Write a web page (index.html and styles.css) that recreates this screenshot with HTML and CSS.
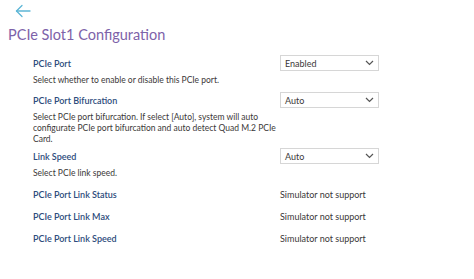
FILE: index.html
```html
<!DOCTYPE html>
<html lang="en">
<head>
    <meta charset="UTF-8">
    <meta name="viewport" content="width=device-width, initial-scale=1.0">
    <title>PCIe Slot1 Configuration</title>
    <link rel="stylesheet" href="styles.css">
</head>
<body>
    <header class="page-header">
        <a href="#" class="back-btn" aria-label="Back">
            <svg width="16" height="14" viewBox="0 0 16 14" fill="none" stroke="currentColor" stroke-width="1.3" stroke-linecap="round" stroke-linejoin="round">
                <path d="M15 7H1.5"/>
                <path d="M7 1.5L1.5 7L7 12.5"/>
            </svg>
        </a>
        <h1 class="page-title">PCIe Slot1 Configuration</h1>
    </header>

    <main class="settings">
        <!-- PCIe Port -->
        <div class="setting setting-first">
            <div class="setting-row">
                <span class="setting-label">PCIe Port</span>
                <div class="select">
                    <span>Enabled</span>
                    <svg class="chevron" width="9" height="6" viewBox="0 0 9 6"><path d="M1 1l3.5 3.5L8 1" fill="none" stroke="currentColor" stroke-width="1.2"/></svg>
                </div>
            </div>
            <p class="setting-desc">Select whether to enable or disable this PCIe port.</p>
        </div>

        <!-- Bifurcation -->
        <div class="setting">
            <div class="setting-row">
                <span class="setting-label">PCIe Port Bifurcation</span>
                <div class="select">
                    <span>Auto</span>
                    <svg class="chevron" width="9" height="6" viewBox="0 0 9 6"><path d="M1 1l3.5 3.5L8 1" fill="none" stroke="currentColor" stroke-width="1.2"/></svg>
                </div>
            </div>
            <p class="setting-desc">Select PCIe port bifurcation. If select [Auto], system will auto configurate PCIe port bifurcation and auto detect Quad M.2 PCIe Card.</p>
        </div>

        <!-- Link Speed -->
        <div class="setting">
            <div class="setting-row">
                <span class="setting-label">Link Speed</span>
                <div class="select">
                    <span>Auto</span>
                    <svg class="chevron" width="9" height="6" viewBox="0 0 9 6"><path d="M1 1l3.5 3.5L8 1" fill="none" stroke="currentColor" stroke-width="1.2"/></svg>
                </div>
            </div>
            <p class="setting-desc">Select PCIe link speed.</p>
        </div>

        <!-- 只读状态 -->
        <div class="setting-row info-row">
            <span class="setting-label">PCIe Port Link Status</span>
            <span class="setting-value">Simulator not support</span>
        </div>
        <div class="setting-row info-row">
            <span class="setting-label">PCIe Port Link Max</span>
            <span class="setting-value">Simulator not support</span>
        </div>
        <div class="setting-row info-row">
            <span class="setting-label">PCIe Port Link Speed</span>
            <span class="setting-value">Simulator not support</span>
        </div>
    </main>
</body>
</html>
```

FILE: styles.css
```css
:root {
    --title-color: #7d62a9;
    --label-color: #2d4c7c;
    --text-color: #3b3838;
    --accent-color: #5db6d6;
    --border-color: #d6d6d6;
}

* {
    margin: 0;
    padding: 0;
    box-sizing: border-box;
}

body {
    font-family: Lato, 'Liberation Sans', sans-serif;
    background-color: white;
    color: var(--text-color);
    width: 474px;
    height: 279px;
    overflow: hidden;
}

.page-header {
    padding: 4px 8px 0;
}

.back-btn {
    display: block;
    width: 16px;
    height: 14px;
    margin-left: 7px;
    color: var(--accent-color);
}

.back-btn svg {
    display: block;
}

.page-title {
    font-size: 14.5px;
    font-weight: 400;
    color: var(--title-color);
    line-height: 20px;
    margin-top: 7px;
}

.settings {
    padding: 10px 0 0 33px;
}

.setting-row {
    display: grid;
    grid-template-columns: 247px 99px;
    align-items: center;
    height: 16px;
}

.setting-label {
    font-size: 9px;
    font-weight: 600;
    color: var(--label-color);
}

.select {
    display: flex;
    justify-content: space-between;
    align-items: center;
    height: 16px;
    padding: 0 4px;
    border: 1px solid var(--border-color);
    font-size: 9px;
    color: var(--text-color);
}

.chevron {
    color: #555;
}

.setting-desc {
    width: 246px;
    font-size: 8.5px;
    line-height: 11px;
    margin-top: 4px;
    margin-bottom: 3px;
}

.setting-first .setting-desc {
    margin-bottom: 6px;
}

.info-row {
    height: 22px;
}

.setting + .info-row {
    margin-top: 4px;
}

.setting-value {
    font-size: 9px;
}
```
